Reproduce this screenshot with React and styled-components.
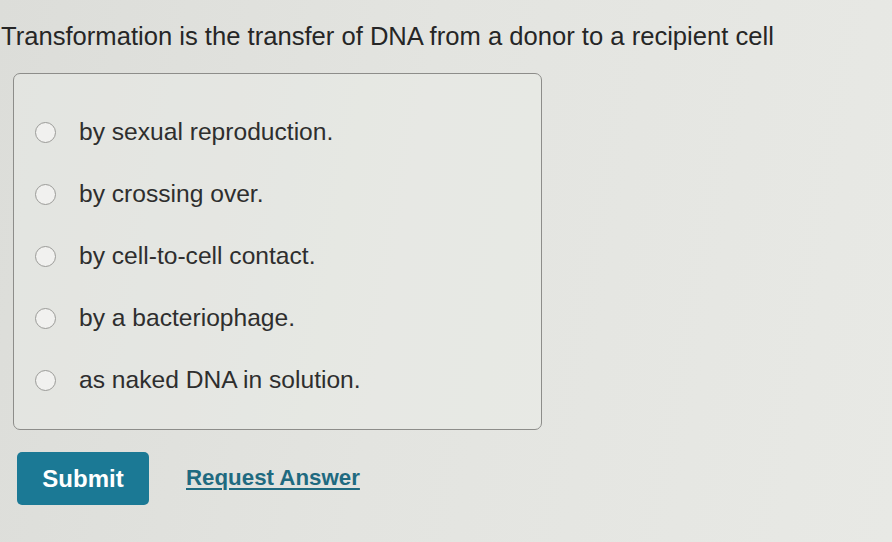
import React from "react";
import styled, { createGlobalStyle } from "styled-components";

const GlobalStyle = createGlobalStyle`
    html, body {
        margin: 0;
        padding: 0;
    }
    body {
        width: 892px;
        height: 542px;
        overflow: hidden;
        background: linear-gradient(100deg, #dcddd9 0%, #e3e4e0 45%, #e8e9e5 100%);
        font-family: "Liberation Sans", Arial, sans-serif;
        color: #303030;
    }
`;

const Page = styled.main`
    padding-top: 21px;
`;

const Question = styled.h1`
    margin: 0;
    padding-left: 1px;
    font-size: 25.6px;
    line-height: 30px;
    font-weight: 400;
    color: #262626;
    white-space: nowrap;
`;

const ChoiceBox = styled.ul`
    list-style: none;
    box-sizing: border-box;
    width: 529px;
    margin: 22px 0 0 13px;
    padding: 27px 0 18px 21px;
    border: 1.5px solid #8d8d8a;
    border-radius: 7px;
    background: rgba(236, 237, 233, 0.45);
`;

const Choice = styled.li`
    display: flex;
    align-items: center;
    height: 62px;
    gap: 23px;
    font-size: 24.6px;
    color: #2e2e2e;
`;

const Radio = styled.span`
    flex: none;
    width: 19px;
    height: 19px;
    border-radius: 50%;
    border: 1.5px solid #9b9b98;
    background: #f1f1ef;
`;

const Actions = styled.div`
    display: flex;
    align-items: center;
    gap: 37px;
    margin: 22px 0 0 17px;
`;

const SubmitButton = styled.button`
    width: 132px;
    height: 53px;
    border: none;
    border-radius: 5px;
    background: #1b7995;
    color: #ffffff;
    font-family: "Liberation Sans", Arial, sans-serif;
    font-size: 24px;
    font-weight: 700;
    padding: 0;
`;

const RequestLink = styled.a`
    font-size: 22.3px;
    font-weight: 700;
    color: #1f6a80;
    text-decoration: underline;
    text-underline-offset: 3px;
    text-decoration-thickness: 1.5px;
    margin-top: -2px;
`;

const choices = [
    "by sexual reproduction.",
    "by crossing over.",
    "by cell-to-cell contact.",
    "by a bacteriophage.",
    "as naked DNA in solution.",
];

function App() {
    return (
        <>
            <GlobalStyle />
            <Page>
                <Question>
                    Transformation is the transfer of DNA from a donor to a recipient cell
                </Question>
                <ChoiceBox>
                    {choices.map((text) => (
                        <Choice key={text}>
                            <Radio />
                            {text}
                        </Choice>
                    ))}
                </ChoiceBox>
                <Actions>
                    <SubmitButton>Submit</SubmitButton>
                    <RequestLink href="#">Request Answer</RequestLink>
                </Actions>
            </Page>
        </>
    );
}

export default App;
